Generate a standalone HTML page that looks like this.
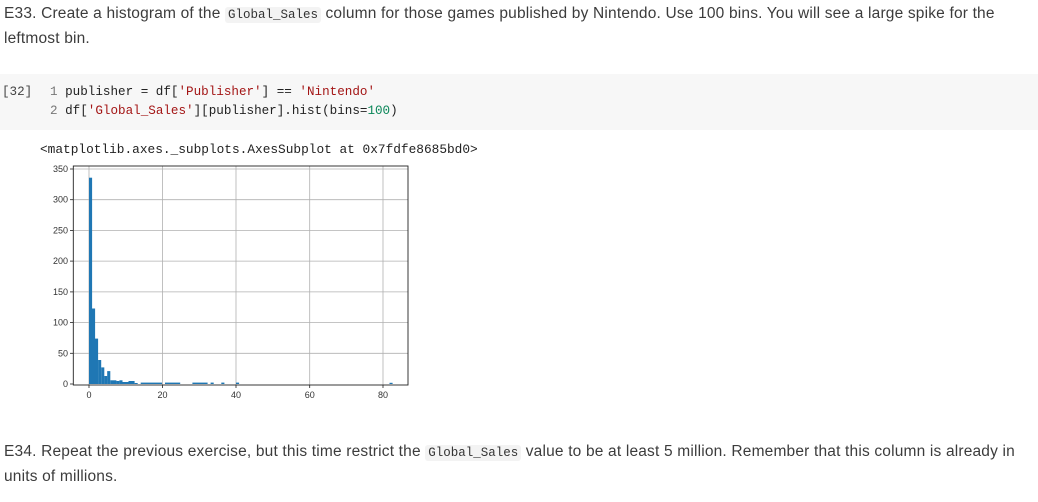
<!DOCTYPE html>
<html><head><meta charset="utf-8"><style>
*{margin:0;padding:0;box-sizing:border-box}
body{width:1038px;height:502px;background:#fff;position:relative;overflow:hidden;font-family:"Liberation Sans",sans-serif;color:#3c3c3c}
.p{position:absolute;left:4px;font-size:15.5px;line-height:24px;width:1034px;white-space:nowrap;letter-spacing:0.18px}
code{font-family:"Liberation Mono",monospace;font-size:12.5px;background:#f3f3f3;padding:1px 3px;border-radius:3px;color:#333;letter-spacing:0}
.cell{position:absolute;left:0;top:74px;width:1038px;height:56px;background:#f7f7f7}
.mono{font-family:"Liberation Mono","DejaVu Sans Mono",monospace;font-size:12.6px;position:absolute;white-space:pre;color:#222}
.s{color:#a31515}.n{color:#098658}.ln{color:#777}
</style></head><body>
<div class="p" style="top:2px">E33. Create a histogram of the <code>Global_Sales</code> column for those games published by Nintendo. Use 100 bins. You will see a large spike for the<br>leftmost bin.</div>
<div class="cell"></div>
<div class="mono" style="left:2px;top:85px;color:#444">[32]</div>
<div class="mono" style="left:50px;top:85px"><span class="ln">1</span> publisher = df[<span class="s">'Publisher'</span>] == <span class="s">'Nintendo'</span></div>
<div class="mono" style="left:50px;top:104px"><span class="ln">2</span> df[<span class="s">'Global_Sales'</span>][publisher].hist(bins=<span class="n">100</span>)</div>
<div class="mono" style="left:40px;top:142px;font-size:12.8px">&lt;matplotlib.axes._subplots.AxesSubplot at 0x7fdfe8685bd0&gt;</div>
<svg style="position:absolute;left:0;top:0" width="1038" height="502" font-family="Liberation Sans, sans-serif" font-size="9" fill="#333">
<g stroke="#b0b0b0" stroke-width="0.8">
<line x1="89" y1="166" x2="89" y2="385"/><line x1="162.5" y1="166" x2="162.5" y2="385"/><line x1="236" y1="166" x2="236" y2="385"/><line x1="309.7" y1="166" x2="309.7" y2="385"/><line x1="383" y1="166" x2="383" y2="385"/>
<line x1="73" y1="353.3" x2="408" y2="353.3"/><line x1="73" y1="322.6" x2="408" y2="322.6"/><line x1="73" y1="291.9" x2="408" y2="291.9"/><line x1="73" y1="261.1" x2="408" y2="261.1"/><line x1="73" y1="230.4" x2="408" y2="230.4"/><line x1="73" y1="199.7" x2="408" y2="199.7"/><line x1="73" y1="169" x2="408" y2="169"/>
</g>
<g fill="#1f77b4">
<rect x="89" y="177.7" width="3.1" height="206.3"/>
<rect x="92" y="308.5" width="3.1" height="75.5"/>
<rect x="95" y="338.6" width="3.1" height="45.4"/>
<rect x="98.1" y="360" width="3.1" height="24"/>
<rect x="101.2" y="367.4" width="3.1" height="16.6"/>
<rect x="104.2" y="376" width="3.1" height="8"/>
<rect x="107.2" y="371.1" width="3.1" height="12.9"/>
<rect x="110.3" y="380.3" width="6.1" height="3.7"/>
<rect x="116.3" y="381" width="3.1" height="3"/>
<rect x="119.4" y="380.3" width="3.1" height="3.7"/>
<rect x="122.4" y="382" width="6.1" height="2"/>
<rect x="128.5" y="381" width="6.1" height="3"/>
<rect x="134.6" y="383" width="3.1" height="1"/>
<rect x="140.7" y="382.6" width="21.3" height="1.4"/>
<rect x="165" y="382.6" width="3.1" height="1.4"/>
<rect x="168" y="382.6" width="12.2" height="1.4"/>
<rect x="192.4" y="382.6" width="15.2" height="1.4"/>
<rect x="210.6" y="382.6" width="3.1" height="1.4"/>
<rect x="221.3" y="382.6" width="3.1" height="1.4"/>
<rect x="236" y="382.6" width="3.1" height="1.4"/>
<rect x="389.5" y="382.8" width="3.1" height="1.2"/>
</g>
<rect x="73.3" y="166" width="334.7" height="219" fill="none" stroke="#222" stroke-width="0.9"/>
<g stroke="#222" stroke-width="0.8">
<line x1="70" y1="384" x2="73" y2="384"/><line x1="70" y1="353.3" x2="73" y2="353.3"/><line x1="70" y1="322.6" x2="73" y2="322.6"/><line x1="70" y1="291.9" x2="73" y2="291.9"/><line x1="70" y1="261.1" x2="73" y2="261.1"/><line x1="70" y1="230.4" x2="73" y2="230.4"/><line x1="70" y1="199.7" x2="73" y2="199.7"/><line x1="70" y1="169" x2="73" y2="169"/>
<line x1="89" y1="385" x2="89" y2="388"/><line x1="162.5" y1="385" x2="162.5" y2="388"/><line x1="236" y1="385" x2="236" y2="388"/><line x1="309.7" y1="385" x2="309.7" y2="388"/><line x1="383" y1="385" x2="383" y2="388"/>
</g>
<g text-anchor="end">
<text x="68" y="387">0</text><text x="68" y="356.3">50</text><text x="68" y="325.6">100</text><text x="68" y="294.9">150</text><text x="68" y="264.1">200</text><text x="68" y="233.4">250</text><text x="68" y="202.7">300</text><text x="68" y="172">350</text>
</g>
<g text-anchor="middle">
<text x="89" y="398">0</text><text x="162.5" y="398">20</text><text x="236" y="398">40</text><text x="309.7" y="398">60</text><text x="383" y="398">80</text>
</g>
</svg>
<div class="p" style="top:440px">E34. Repeat the previous exercise, but this time restrict the <code>Global_Sales</code> value to be at least 5 million. Remember that this column is already in<br>units of millions.</div>
</body></html>
